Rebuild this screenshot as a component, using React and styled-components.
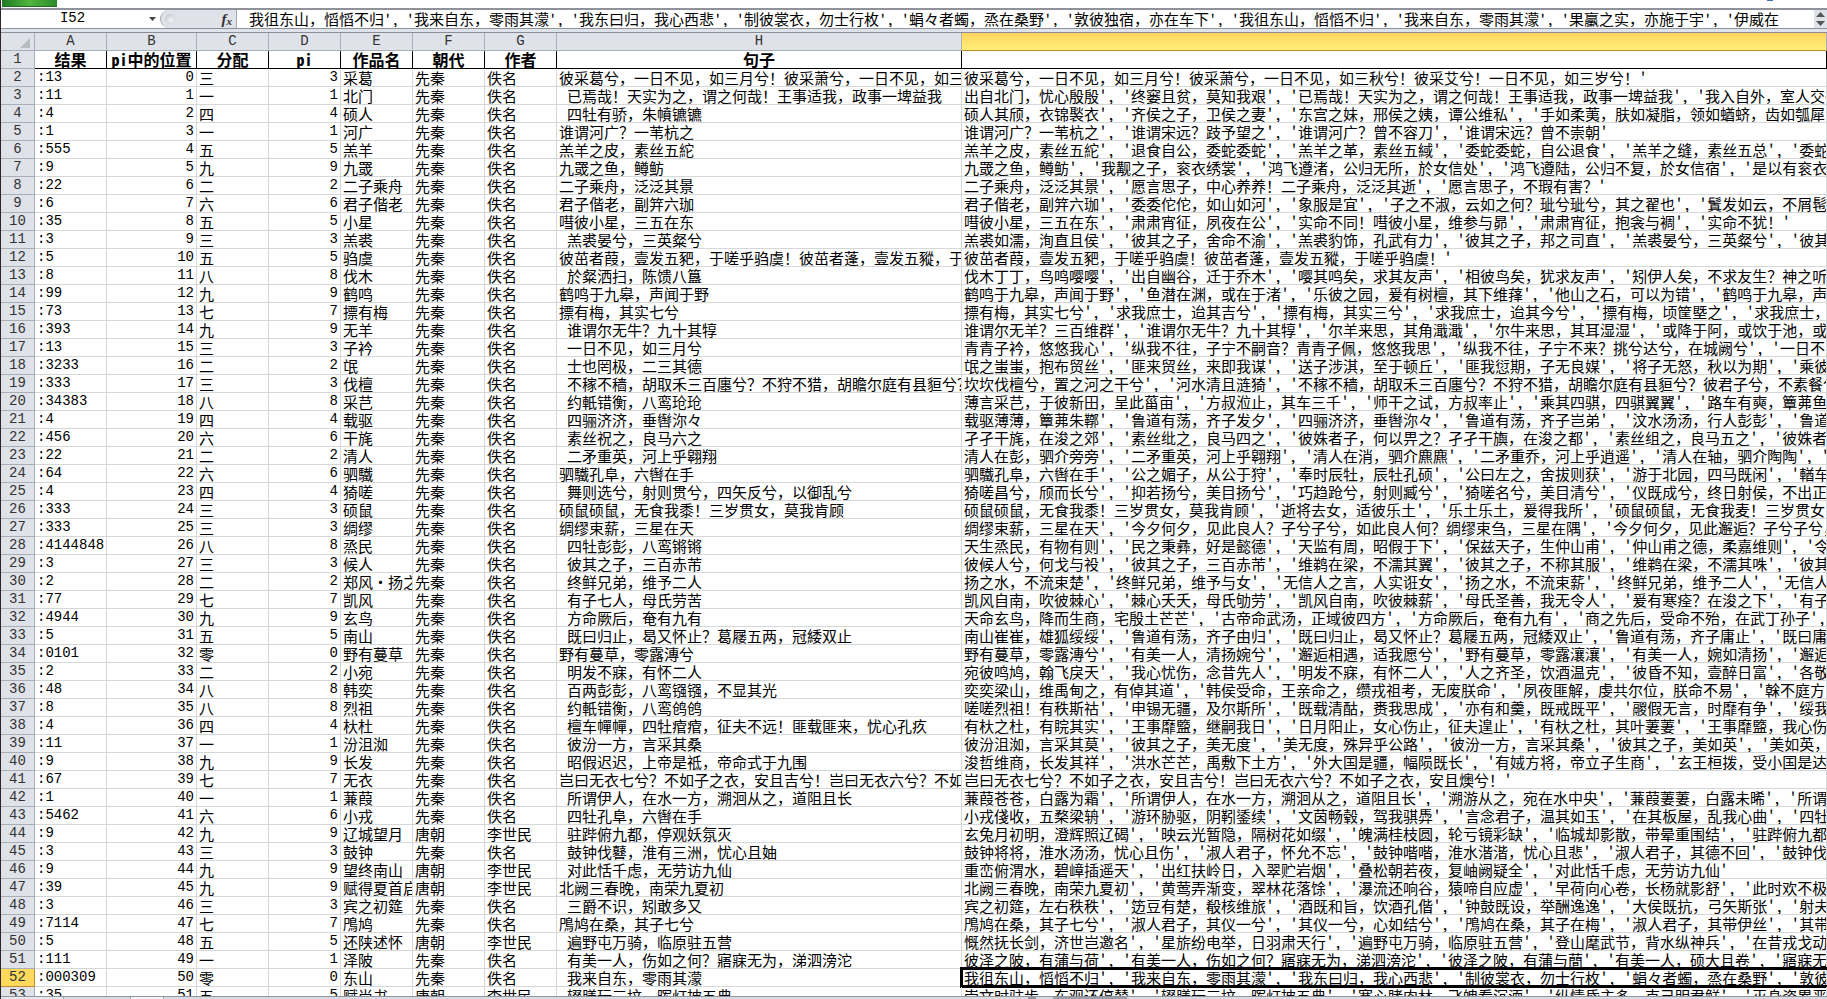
import React from "react";
import styled, { createGlobalStyle } from "styled-components";

const formula =
  "我徂东山，慆慆不归', '我来自东，零雨其濛', '我东曰归，我心西悲', '制彼裳衣，勿士行枚', '蜎々者蠋，烝在桑野', '敦彼独宿，亦在车下', '我徂东山，慆慆不归', '我来自东，零雨其濛', '果臝之实，亦施于宇', '伊威在";

const columns = [
  { letter: "A", width: 72, title: "结果" },
  { letter: "B", width: 90, title: "pi中的位置" },
  { letter: "C", width: 72, title: "分配" },
  { letter: "D", width: 72, title: "pi" },
  { letter: "E", width: 72, title: "作品名" },
  { letter: "F", width: 72, title: "朝代" },
  { letter: "G", width: 72, title: "作者" },
  { letter: "H", width: 405, title: "句子" },
];

const numerals = "零一二三四五六七八九";

// [result, digit of pi, title, sentence, full text, dynasty, author]
const poems = [
  [":13", 3, "采葛", "彼采葛兮，一日不见，如三月兮！彼采萧兮，一日不见，如三秋兮！", "彼采葛兮，一日不见，如三月兮！彼采萧兮，一日不见，如三秋兮！彼采艾兮！一日不见，如三岁兮！'"],
  [":11", 1, "北门", " 已焉哉！天实为之，谓之何哉！王事适我，政事一埤益我", "出自北门，忧心殷殷', '终窭且贫，莫知我艰', '已焉哉！天实为之，谓之何哉！王事适我，政事一埤益我', '我入自外，室人交徧谪我"],
  [":4", 4, "硕人", " 四牡有骄，朱幩镳镳", "硕人其颀，衣锦褧衣', '齐侯之子，卫侯之妻', '东宫之妹，邢侯之姨，谭公维私', '手如柔荑，肤如凝脂，领如蝤蛴，齿如瓠犀"],
  [":1", 1, "河广", "谁谓河广？一苇杭之", "谁谓河广？一苇杭之', '谁谓宋远？跂予望之', '谁谓河广？曾不容刀', '谁谓宋远？曾不崇朝'"],
  [":555", 5, "羔羊", "羔羊之皮，素丝五紽", "羔羊之皮，素丝五紽', '退食自公，委蛇委蛇', '羔羊之革，素丝五緎', '委蛇委蛇，自公退食', '羔羊之缝，素丝五总', '委蛇委蛇"],
  [":9", 9, "九罭", "九罭之鱼，鳟鲂", "九罭之鱼，鳟鲂', '我觏之子，衮衣绣裳', '鸿飞遵渚，公归无所，於女信处', '鸿飞遵陆，公归不复，於女信宿', '是以有衮衣兮"],
  [":22", 2, "二子乘舟", "二子乘舟，泛泛其景", "二子乘舟，泛泛其景', '愿言思子，中心养养！二子乘舟，泛泛其逝', '愿言思子，不瑕有害？'"],
  [":6", 6, "君子偕老", "君子偕老，副笄六珈", "君子偕老，副笄六珈', '委委佗佗，如山如河', '象服是宜', '子之不淑，云如之何？玼兮玼兮，其之翟也', '鬒发如云，不屑髢也"],
  [":35", 5, "小星", "嘒彼小星，三五在东", "嘒彼小星，三五在东', '肃肃宵征，夙夜在公', '实命不同！嘒彼小星，维参与昴', '肃肃宵征，抱衾与裯', '实命不犹！'"],
  [":3", 3, "羔裘", " 羔裘晏兮，三英粲兮", "羔裘如濡，洵直且侯', '彼其之子，舍命不渝', '羔裘豹饰，孔武有力', '彼其之子，邦之司直', '羔裘晏兮，三英粲兮', '彼其之子"],
  [":5", 5, "驺虞", "彼茁者葭，壹发五豝，于嗟乎驺虞！彼茁者蓬，壹发五豵，于嗟乎驺虞！", "彼茁者葭，壹发五豝，于嗟乎驺虞！彼茁者蓬，壹发五豵，于嗟乎驺虞！'"],
  [":8", 8, "伐木", " 於粲洒扫，陈馈八簋", "伐木丁丁，鸟鸣嘤嘤', '出自幽谷，迁于乔木', '嘤其鸣矣，求其友声', '相彼鸟矣，犹求友声', '矧伊人矣，不求友生？神之听之"],
  [":99", 9, "鹤鸣", "鹤鸣于九皋，声闻于野", "鹤鸣于九皋，声闻于野', '鱼潜在渊，或在于渚', '乐彼之园，爰有树檀，其下维萚', '他山之石，可以为错', '鹤鸣于九皋，声闻于天"],
  [":73", 7, "摽有梅", "摽有梅，其实七兮", "摽有梅，其实七兮', '求我庶士，迨其吉兮', '摽有梅，其实三兮', '求我庶士，迨其今兮', '摽有梅，顷筐塈之', '求我庶士，迨其谓之"],
  [":393", 9, "无羊", " 谁谓尔无牛？九十其犉", "谁谓尔无羊？三百维群', '谁谓尔无牛？九十其犉', '尔羊来思，其角濈濈', '尔牛来思，其耳湿湿', '或降于阿，或饮于池，或寝或讹"],
  [":13", 3, "子衿", " 一日不见，如三月兮", "青青子衿，悠悠我心', '纵我不往，子宁不嗣音？青青子佩，悠悠我思', '纵我不往，子宁不来？挑兮达兮，在城阙兮', '一日不见，如三月兮"],
  [":3233", 2, "氓", " 士也罔极，二三其德", "氓之蚩蚩，抱布贸丝', '匪来贸丝，来即我谋', '送子涉淇，至于顿丘', '匪我愆期，子无良媒', '将子无怒，秋以为期', '乘彼垝垣"],
  [":333", 3, "伐檀", " 不稼不穑，胡取禾三百廛兮？不狩不猎，胡瞻尔庭有县貆兮？", "坎坎伐檀兮，置之河之干兮', '河水清且涟猗', '不稼不穑，胡取禾三百廛兮？不狩不猎，胡瞻尔庭有县貆兮？彼君子兮，不素餐兮"],
  [":34383", 8, "采芑", " 约軝错衡，八鸾玱玱", "薄言采芑，于彼新田，呈此菑亩', '方叔涖止，其车三千', '师干之试，方叔率止', '乘其四骐，四骐翼翼', '路车有奭，簟茀鱼服"],
  [":4", 4, "载驱", " 四骊济济，垂辔沵々", "载驱薄薄，簟茀朱鞹', '鲁道有荡，齐子发夕', '四骊济济，垂辔沵々', '鲁道有荡，齐子岂弟', '汶水汤汤，行人彭彭', '鲁道有荡"],
  [":456", 6, "干旄", " 素丝祝之，良马六之", "孑孑干旄，在浚之郊', '素丝纰之，良马四之', '彼姝者子，何以畀之？孑孑干旟，在浚之都', '素丝组之，良马五之', '彼姝者子"],
  [":22", 2, "清人", " 二矛重英，河上乎翱翔", "清人在彭，驷介旁旁', '二矛重英，河上乎翱翔', '清人在消，驷介麃麃', '二矛重乔，河上乎逍遥', '清人在轴，驷介陶陶', '左旋右抽"],
  [":64", 6, "驷驖", "驷驖孔阜，六辔在手", "驷驖孔阜，六辔在手', '公之媚子，从公于狩', '奉时辰牡，辰牡孔硕', '公曰左之，舍拔则获', '游于北园，四马既闲', '輶车鸾镳"],
  [":4", 4, "猗嗟", " 舞则选兮，射则贯兮，四矢反兮，以御乱兮", "猗嗟昌兮，颀而长兮', '抑若扬兮，美目扬兮', '巧趋跄兮，射则臧兮', '猗嗟名兮，美目清兮', '仪既成兮，终日射侯，不出正兮"],
  [":333", 3, "硕鼠", "硕鼠硕鼠，无食我黍！三岁贯女，莫我肯顾", "硕鼠硕鼠，无食我黍！三岁贯女，莫我肯顾', '逝将去女，适彼乐土', '乐土乐土，爰得我所', '硕鼠硕鼠，无食我麦！三岁贯女，莫我肯德"],
  [":333", 3, "绸缪", "绸缪束薪，三星在天", "绸缪束薪，三星在天', '今夕何夕，见此良人？子兮子兮，如此良人何？绸缪束刍，三星在隅', '今夕何夕，见此邂逅？子兮子兮，如此邂逅何"],
  [":4144848", 8, "烝民", " 四牡彭彭，八鸾锵锵", "天生烝民，有物有则', '民之秉彝，好是懿德', '天监有周，昭假于下', '保兹天子，生仲山甫', '仲山甫之德，柔嘉维则', '令仪令色"],
  [":3", 3, "候人", " 彼其之子，三百赤芾", "彼候人兮，何戈与祋', '彼其之子，三百赤芾', '维鹈在梁，不濡其翼', '彼其之子，不称其服', '维鹈在梁，不濡其咮', '彼其之子"],
  [":2", 2, "郑风·扬之水", " 终鲜兄弟，维予二人", "扬之水，不流束楚', '终鲜兄弟，维予与女', '无信人之言，人实诳女', '扬之水，不流束薪', '终鲜兄弟，维予二人', '无信人之言"],
  [":77", 7, "凯风", " 有子七人，母氏劳苦", "凯风自南，吹彼棘心', '棘心夭夭，母氏劬劳', '凯风自南，吹彼棘薪', '母氏圣善，我无令人', '爰有寒痊？在浚之下', '有子七人"],
  [":4944", 9, "玄鸟", " 方命厥后，奄有九有", "天命玄鸟，降而生商，宅殷土芒芒', '古帝命武汤，正域彼四方', '方命厥后，奄有九有', '商之先后，受命不殆，在武丁孙子', '武丁孙子"],
  [":5", 5, "南山", " 既曰归止，曷又怀止？葛屦五两，冠緌双止", "南山崔崔，雄狐绥绥', '鲁道有荡，齐子由归', '既曰归止，曷又怀止？葛屦五两，冠緌双止', '鲁道有荡，齐子庸止', '既曰庸止"],
  [":0101", 0, "野有蔓草", "野有蔓草，零露漙兮", "野有蔓草，零露漙兮', '有美一人，清扬婉兮', '邂逅相遇，适我愿兮', '野有蔓草，零露瀼瀼', '有美一人，婉如清扬', '邂逅相遇"],
  [":2", 2, "小宛", " 明发不寐，有怀二人", "宛彼鸣鸠，翰飞戾天', '我心忧伤，念昔先人', '明发不寐，有怀二人', '人之齐圣，饮酒温克', '彼昏不知，壹醉日富', '各敬尔仪"],
  [":48", 8, "韩奕", " 百两彭彭，八鸾镪镪，不显其光", "奕奕梁山，维禹甸之，有倬其道', '韩侯受命，王亲命之，缵戎祖考，无废朕命', '夙夜匪解，虔共尔位，朕命不易', '榦不庭方"],
  [":8", 8, "烈祖", " 约軝错衡，八鸾鸧鸧", "嗟嗟烈祖！有秩斯祜', '申锡无疆，及尔斯所', '既载清酤，赉我思成', '亦有和羹，既戒既平', '鬷假无言，时靡有争', '绥我眉寿"],
  [":4", 4, "杕杜", " 檀车幝幝，四牡痯痯，征夫不远！匪载匪来，忧心孔疚", "有杕之杜，有睆其实', '王事靡盬，继嗣我日', '日月阳止，女心伤止，征夫遑止', '有杕之杜，其叶萋萋', '王事靡盬，我心伤悲"],
  [":11", 1, "汾沮洳", " 彼汾一方，言采其桑", "彼汾沮洳，言采其莫', '彼其之子，美无度', '美无度，殊异乎公路', '彼汾一方，言采其桑', '彼其之子，美如英', '美如英，殊异乎公行"],
  [":9", 9, "长发", " 昭假迟迟，上帝是祗，帝命式于九围", "浚哲维商，长发其祥', '洪水芒芒，禹敷下土方', '外大国是疆，幅陨既长', '有娀方将，帝立子生商', '玄王桓拨，受小国是达"],
  [":67", 7, "无衣", "岂曰无衣七兮？不如子之衣，安且吉兮！岂曰无衣六兮？不如子之衣", "岂曰无衣七兮？不如子之衣，安且吉兮！岂曰无衣六兮？不如子之衣，安且燠兮！'"],
  [":1", 1, "蒹葭", " 所谓伊人，在水一方，溯洄从之，道阻且长", "蒹葭苍苍，白露为霜', '所谓伊人，在水一方，溯洄从之，道阻且长', '溯游从之，宛在水中央', '蒹葭萋萋，白露未晞', '所谓伊人"],
  [":5462", 6, "小戎", " 四牡孔阜，六辔在手", "小戎俴收，五楘梁辀', '游环胁驱，阴靷鋈续', '文茵畅毂，驾我骐馵', '言念君子，温其如玉', '在其板屋，乱我心曲', '四牡孔阜"],
  [":9", 9, "辽城望月", " 驻跸俯九都，停观妖氛灭", "玄兔月初明，澄辉照辽碣', '映云光暂隐，隔树花如缀', '魄满桂枝圆，轮亏镜彩缺', '临城却影散，带晕重围结', '驻跸俯九都，停观妖氛灭", "唐朝", "李世民"],
  [":3", 3, "鼓钟", " 鼓钟伐鼛，淮有三洲，忧心且妯", "鼓钟将将，淮水汤汤，忧心且伤', '淑人君子，怀允不忘', '鼓钟喈喈，淮水湝湝，忧心且悲', '淑人君子，其德不回', '鼓钟伐鼛"],
  [":9", 9, "望终南山", " 对此恬千虑，无劳访九仙", "重峦俯渭水，碧嶂插遥天', '出红扶岭日，入翠贮岩烟', '叠松朝若夜，复岫阙疑全', '对此恬千虑，无劳访九仙'", "唐朝", "李世民"],
  [":39", 9, "赋得夏首启节", "北阙三春晚，南荣九夏初", "北阙三春晚，南荣九夏初', '黄莺弄渐变，翠林花落馀', '瀑流还响谷，猿啼自应虚', '早荷向心卷，长杨就影舒', '此时欢不极，调轸坐相于", "唐朝", "李世民"],
  [":3", 3, "宾之初筵", " 三爵不识，矧敢多又", "宾之初筵，左右秩秩', '笾豆有楚，殽核维旅', '酒既和旨，饮酒孔偕', '钟鼓既设，举酬逸逸', '大侯既抗，弓矢斯张', '射夫既同"],
  [":7114", 7, "鳲鸠", "鳲鸠在桑，其子七兮", "鳲鸠在桑，其子七兮', '淑人君子，其仪一兮', '其仪一兮，心如结兮', '鳲鸠在桑，其子在梅', '淑人君子，其带伊丝', '其带伊丝"],
  [":5", 5, "还陕述怀", " 遍野屯万骑，临原驻五营", "慨然抚长剑，济世岂邀名', '星旂纷电举，日羽肃天行', '遍野屯万骑，临原驻五营', '登山麾武节，背水纵神兵', '在昔戎戈动，今来宇宙平", "唐朝", "李世民"],
  [":111", 1, "泽陂", " 有美一人，伤如之何？寤寐无为，涕泗滂沱", "彼泽之陂，有蒲与荷', '有美一人，伤如之何？寤寐无为，涕泗滂沱', '彼泽之陂，有蒲与蕳', '有美一人，硕大且卷', '寤寐无为"],
  [":000309", 0, "东山", " 我来自东，零雨其濛", "我徂东山，慆慆不归', '我来自东，零雨其濛', '我东曰归，我心西悲', '制彼裳衣，勿士行枚', '蜎々者蠋，烝在桑野', '敦彼独宿"],
  [":35", 5, "赋尚书", " 辍膳玩三坟，晖灯披五典", "崇文时驻步，东观还停辇', '辍膳玩三坟，晖灯披五典', '寒心睹肉林，飞魄看沉湎', '纵情昏主多，克己明君鲜', '灭身资累恶，成名由积善", "唐朝", "李世民"],
];

const ACTIVE_ROW = 52;

const App = () => {
  return (
    <Workbook>
      <GlobalStyle />
      <RibbonEdge>
        <FileTab />
        <HelpDot />
      </RibbonEdge>
      <FormulaBar>
        <NameBox aria-label="Name Box" defaultValue="I52" />
        <NameButton type="button" aria-label="Name list">
          <svg width="7" height="4" viewBox="0 0 7 4">
            <path d="M0 0h7L3.5 4z" fill="#444" />
          </svg>
        </NameButton>
        <FunctionArea>
          <Knob />
          <FunctionButton type="button" aria-label="Insert function">
            f<sub>x</sub>
          </FunctionButton>
        </FunctionArea>
        <FormulaInput aria-label="Formula" defaultValue={formula} />
        <Spinner>
          <SpinButton type="button" aria-label="Previous line">
            <svg width="9" height="5" viewBox="0 0 9 5">
              <path d="M0 5h9L4.5 0z" fill="#555" />
            </svg>
          </SpinButton>
          <SpinButton type="button" aria-label="Next line">
            <svg width="9" height="5" viewBox="0 0 9 5">
              <path d="M0 0h9L4.5 5z" fill="#555" />
            </svg>
          </SpinButton>
        </Spinner>
      </FormulaBar>
      <SheetArea>
        <Sheet>
          <colgroup>
            <Col $width={34} />
            {columns.map((column) => (
              <Col key={column.letter} $width={column.width} />
            ))}
            <col />
          </colgroup>
          <thead>
            <tr>
              <Corner>
                <svg width="10" height="10" viewBox="0 0 10 10">
                  <path d="M10 0v10H0z" fill="#b7bbc2" />
                </svg>
              </Corner>
              {columns.map((column) => (
                <ColumnHeader key={column.letter} scope="col">
                  {column.letter}
                </ColumnHeader>
              ))}
              <ColumnHeader $active />
            </tr>
          </thead>
          <tbody>
            <tr>
              <RowHeader scope="row">1</RowHeader>
              {columns.map((column) => (
                <TitleCell key={column.letter}>
                  <Text>{column.title}</Text>
                </TitleCell>
              ))}
              <TitleCell />
            </tr>
            {poems.map((poem, index) => (
              <PoemRow key={index} poem={poem} index={index} />
            ))}
          </tbody>
        </Sheet>
      </SheetArea>
      <BottomEdge>
        <TabNav />
        <SheetTab />
        <Track>
          <Splitter />
          <Thumb />
        </Track>
      </BottomEdge>
    </Workbook>
  );
};

const PoemRow = ({ poem, index }) => {
  const [result, digit, title, sentence, full, dynasty = "先秦", author = "佚名"] = poem;
  const active = index + 2 === ACTIVE_ROW;

  return (
    <tr>
      <RowHeader scope="row" $active={active}>
        {index + 2}
      </RowHeader>
      <Cell>
        <Digits>{result}</Digits>
      </Cell>
      <Cell $right>
        <Digits>{index}</Digits>
      </Cell>
      <Cell>
        <Text>{numerals[digit]}</Text>
      </Cell>
      <Cell $right>
        <Digits>{digit}</Digits>
      </Cell>
      <Cell>
        <Text>{title}</Text>
      </Cell>
      <Cell>
        <Text>{dynasty}</Text>
      </Cell>
      <Cell>
        <Text>{author}</Text>
      </Cell>
      <Cell>
        <Text>
          <Verse>{sentence}</Verse>
        </Text>
      </Cell>
      <Cell $selected={active}>
        <Text>
          <Verse>{full}</Verse>
        </Text>
      </Cell>
    </tr>
  );
};

// quotes, commas and spaces between the verses are a little wider than half a hanzi
const Verse = ({ children }) =>
  children
    .split(/([ ',]+)/)
    .map((part, i) => (i % 2 ? <Latin key={i}>{part}</Latin> : part));

const GlobalStyle = createGlobalStyle`
  * {
    box-sizing: border-box;
  }
  body {
    margin: 0;
    overflow: hidden;
    background: #fff;
  }
  body, input, button {
    font-family: "Noto Sans Mono CJK SC", "Noto Sans CJK SC", "Liberation Mono", monospace;
    font-size: 15px;
    color: #000;
  }
`;
const Workbook = styled.main`
  display: flex;
  flex-direction: column;
  height: 100vh;
  border-left: 1px solid #2d2528;
`;
const RibbonEdge = styled.div`
  display: flex;
  justify-content: space-between;
  height: 8px;
  padding: 0 54px 0 1px;
`;
const FileTab = styled.div`
  width: 55px;
  height: 7px;
  background: linear-gradient(90deg, #1f7a26, #4fb53c 50%, #2a8a2c);
  border-bottom: 1px solid #1d6b25;
`;
const HelpDot = styled.div`
  width: 6px;
  height: 1px;
  background: #3f74c0;
`;
const FormulaBar = styled.div`
  display: flex;
  height: 24px;
  border-top: 2px solid #8f929b;
  border-bottom: 3px solid #dfe3ec;
  box-shadow: inset 0 -1px 0 #8f929b;
`;
const NameBox = styled.input`
  width: 143px;
  height: 17px;
  padding: 0;
  border: 0;
  outline: 0;
  background: none;
  font-family: "Liberation Mono", monospace;
  font-size: 14px;
  line-height: 17px;
  text-align: center;
`;
const NameButton = styled.button`
  display: flex;
  align-items: center;
  justify-content: center;
  width: 16px;
  height: 18px;
  padding: 0;
  border: 0;
  background: none;
`;
const FunctionArea = styled.div`
  display: flex;
  align-items: center;
  justify-content: space-between;
  width: 77px;
  height: 18px;
  padding: 0 4px;
  background: #dfe2e8;
  border-left: 1px solid #a5a9b2;
  border-right: 1px solid #a5a9b2;
  border-radius: 9px 0 0 9px;
`;
const Knob = styled.span`
  width: 10px;
  height: 10px;
  border-radius: 50%;
  background: radial-gradient(circle at 60% 60%, #f4f5f8, #b9bdc6);
`;
const FunctionButton = styled.button`
  padding: 0;
  border: 0;
  background: none;
  color: #333;
  font: italic bold 15px/16px "Liberation Serif", serif;

  sub {
    font-size: 11px;
    line-height: 1;
    vertical-align: -1px;
  }
`;
const FormulaInput = styled.input`
  flex: 1;
  min-width: 0;
  height: 17px;
  padding: 0 12px;
  border: 0;
  outline: 0;
  background: none;
  line-height: 17px;
`;
const Spinner = styled.div`
  display: flex;
  flex-direction: column;
  width: 13px;
  height: 18px;
  background: #dfe2e8;
`;
const SpinButton = styled.button`
  display: flex;
  flex: 1;
  align-items: center;
  justify-content: center;
  padding: 0;
  border: 0;
  background: none;
`;
const SheetArea = styled.div`
  flex: 1;
  min-height: 0;
  overflow: hidden;
  border-top: 1px solid #8b8e97;
`;
const Sheet = styled.table`
  width: 100%;
  table-layout: fixed;
  border-collapse: separate;
  border-spacing: 0;

  th,
  td {
    height: 18px;
    padding: 0;
    line-height: 17px;
  }
`;
const Col = styled.col`
  width: ${(props) => props.$width}px;
`;
const ColumnHeader = styled.th`
  background: ${(props) =>
    props.$active ? "linear-gradient(#ffd35c, #fff07a)" : "#dfe2e8"};
  border-right: 1px solid #a9aeb7;
  border-bottom: 1px solid ${(props) => (props.$active ? "#c08a2c" : "#a9aeb7")};
  color: #333;
  font-family: "Liberation Mono", monospace;
  font-size: 14px;
  font-weight: normal;
`;
const Corner = styled.td`
  background: #dfe2e8;
  border-right: 1px solid #a9aeb7;
  border-bottom: 1px solid #a9aeb7;

  svg {
    display: block;
    margin: 2px 4px 0 auto;
  }
`;
const RowHeader = styled.th`
  background: ${(props) => (props.$active ? "#ffd95e" : "#dfe2e8")};
  border-right: 1px solid ${(props) => (props.$active ? "#c08a2c" : "#a9aeb7")};
  border-bottom: 1px solid ${(props) => (props.$active ? "#c08a2c" : "#a9aeb7")};
  color: #333;
  font-family: "Liberation Mono", monospace;
  font-size: 14px;
  font-weight: normal;
`;
const Text = styled.div`
  height: 17px;
  padding: 0 2px;
  overflow: hidden;
  white-space: pre;
`;
const Digits = styled(Text)`
  font-family: "Liberation Mono", monospace;
  font-size: 14px;
`;
const Latin = styled.span`
  font-size: 16px;
  line-height: 1;
`;
const Cell = styled.td`
  position: relative;
  border-right: 1px solid #d6d7d9;
  border-bottom: 1px solid #d6d7d9;
  text-align: ${(props) => (props.$right ? "right" : "left")};

  &::after {
    content: ${(props) => (props.$selected ? '""' : "none")};
    position: absolute;
    inset: -2px -4px -2px -2px;
    border: 3px solid #000;
  }
`;
const TitleCell = styled.td`
  border-right: 1px solid #000;
  border-bottom: 1px solid #000;
  font-size: 16px;
  font-weight: bold;
  text-align: center;
`;
const BottomEdge = styled.div`
  display: flex;
  height: 3px;
  background: #d6dbe4;
  border-top: 1px solid #8f949d;
`;
const TabNav = styled.div`
  width: 63px;
  background: #e6e9ef;
  border-right: 1px solid #a5a9b2;
`;
const SheetTab = styled.div`
  width: 34px;
  margin-left: 66px;
  background: #f3f5f8;
  border-left: 1px solid #a5a9b2;
  border-right: 1px solid #a5a9b2;
`;
const Track = styled.div`
  display: flex;
  flex: 1;
  justify-content: center;
  gap: 17px;
  padding-left: 164px;
`;
const Splitter = styled.div`
  width: 8px;
  background: #fff;
  border: 1px solid #8f949d;
`;
const Thumb = styled.div`
  width: 74px;
  background: #f5f7fb;
  border: 1px solid #9aa0ab;
`;

export default App;
